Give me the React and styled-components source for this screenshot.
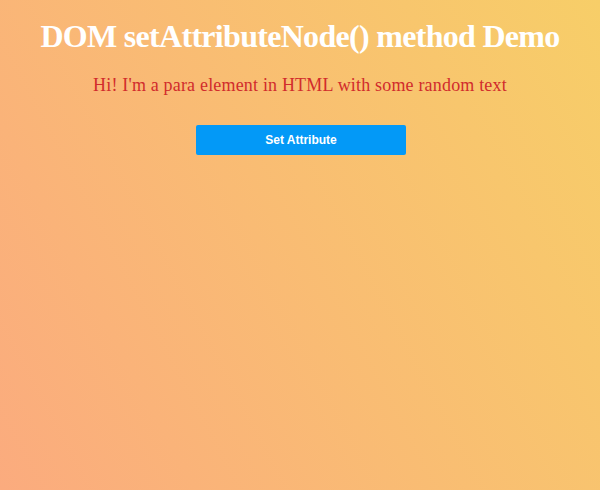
import React from "react";
import styled, { createGlobalStyle } from "styled-components";

const Global = createGlobalStyle`
  html, body { margin: 0; padding: 0; }
  body {
    min-height: 490px;
    background-color: #FBAB7E;
    background-image: linear-gradient(62deg, #FBAB7E 0%, #F7CE68 100%);
    font-family: "Liberation Serif", "Times New Roman", serif;
  }
`;

const Page = styled.div`
  display: flex;
  flex-direction: column;
  align-items: center;
  padding-top: 20px;
  text-align: center;
`;

const Title = styled.h1`
  margin: 0;
  color: #ffffff;
  font-size: 32px;
  font-weight: bold;
  line-height: 32px;
  letter-spacing: -0.7px;
`;

const Para = styled.p`
  margin: 22px 0 0;
  color: #d12c2c;
  font-size: 18px;
  line-height: 22px;
  letter-spacing: 0.18px;
`;

const Button = styled.button`
  margin: 29px 0 0 2px;
  width: 210px;
  height: 30px;
  border: none;
  border-radius: 2px;
  background: #0399f7;
  color: #ffffff;
  font-family: "Liberation Sans", Arial, sans-serif;
  font-weight: bold;
  font-size: 12px;
  cursor: pointer;
`;

export default function App() {
  return (
    <>
      <Global />
      <Page>
        <Title>DOM setAttributeNode() method Demo</Title>
        <Para>Hi! I'm a para element in HTML with some random text</Para>
        <Button>Set Attribute</Button>
      </Page>
    </>
  );
}
